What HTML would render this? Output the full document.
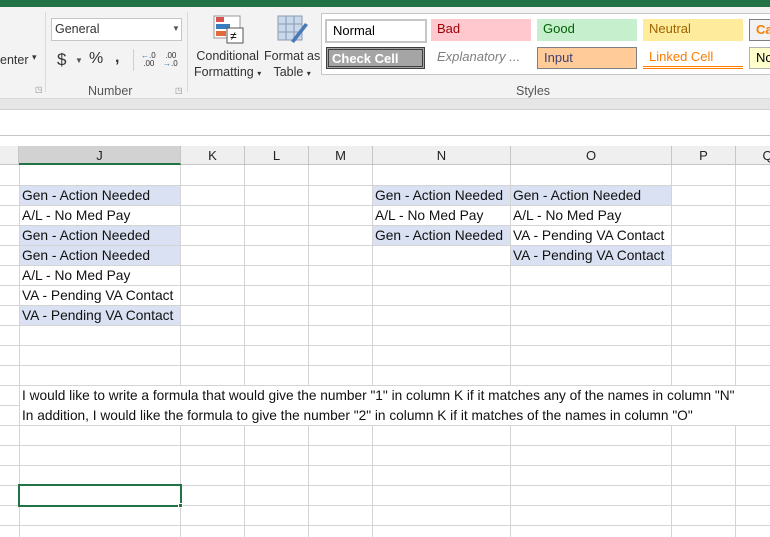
<!DOCTYPE html>
<html><head><style>
*{margin:0;padding:0;box-sizing:border-box}
body{width:770px;height:537px;overflow:hidden;background:#fff;font-family:"Liberation Sans",sans-serif;position:relative}
.a{position:absolute}
.rib{left:0;top:7px;width:770px;height:91px;background:#f3f3f3}
.t{font-size:12.5px;color:#333;white-space:nowrap}
.sty{position:absolute;height:22px;font-size:13px;padding:2px 6px;white-space:nowrap;overflow:hidden}
.cell{position:absolute;font-size:13.8px;color:#111;white-space:nowrap;line-height:20px;padding-left:3px}
.hl{position:absolute;left:0;width:770px;height:1px;background:#d4d4d4}
.vl{position:absolute;top:165px;height:372px;width:1px;background:#d4d4d4}
.hd{position:absolute;top:146px;height:19px;font-size:13px;color:#222;text-align:center;line-height:19px;border-right:1px solid #c6c6c6}
</style></head><body>
<div class="a" style="left:0;top:0;width:770px;height:7px;background:#217346"></div>
<div class="a rib"></div>
<div class="a t" style="left:0;top:53px">enter</div>
<div class="a t" style="left:32px;top:52px;font-size:9px">▾</div>
<div class="a" style="left:45px;top:12px;width:1px;height:80px;background:#dadada"></div>
<div class="a t" style="left:35px;top:85px;font-size:8px;color:#888">◳</div>
<div class="a" style="left:51px;top:18px;width:131px;height:23px;background:#fff;border:1px solid #c6c6c6"></div>
<div class="a t" style="left:55px;top:22px">General</div>
<div class="a t" style="left:172px;top:24px;font-size:8px;color:#555">▼</div>
<div class="a t" style="left:57px;top:50px;font-size:17px">$</div>
<div class="a t" style="left:75px;top:56px;font-size:8px;color:#555">▼</div>
<div class="a t" style="left:89px;top:50px;font-size:16px">%</div>
<div class="a t" style="left:115px;top:49px;font-size:16px;font-weight:bold">,</div>
<div class="a" style="left:133px;top:49px;width:1px;height:22px;background:#d0d0d0"></div>
<div class="a t" style="left:141px;top:52px;font-size:8px;line-height:8px;color:#333"><span style="color:#2b6cb0">←</span>.0<br>&nbsp;.00</div>
<div class="a t" style="left:163px;top:52px;font-size:8px;line-height:8px;color:#333">&nbsp;.00<br><span style="color:#2b6cb0">→</span>.0</div>
<div class="a t" style="left:88px;top:84px;color:#555">Number</div>
<div class="a t" style="left:175px;top:86px;font-size:8px;color:#888">◳</div>
<div class="a" style="left:187px;top:12px;width:1px;height:80px;background:#dadada"></div>
<svg class="a" style="left:213px;top:15px" width="32" height="30"><g stroke="#999" fill="#fff"><rect x="1" y="1" width="26" height="22"/></g><rect x="3" y="2" width="8" height="5" fill="#d9534f"/><rect x="3" y="9" width="14" height="5" fill="#3a7cc0"/><rect x="3" y="16" width="10" height="5" fill="#e06a3a"/><rect x="14" y="13" width="16" height="15" fill="#fff" stroke="#555"/><text x="17" y="25" font-size="12" font-family="Liberation Sans">≠</text></svg>
<svg class="a" style="left:277px;top:15px" width="32" height="30"><rect x="1" y="1" width="24" height="24" fill="#c9d8ea" stroke="#8a9bb0"/><path d="M1 9H25M1 17H25M9 1V25M17 1V25" stroke="#8a9bb0"/><path d="M14 26L28 8l3 2-14 18z" fill="#4a7ab5"/></svg>
<div class="a t" style="left:194px;top:48px;text-align:center;line-height:16px">Conditional<br>Formatting <span style="font-size:8px">▾</span></div>
<div class="a t" style="left:264px;top:48px;text-align:center;line-height:16px">Format as<br>Table <span style="font-size:8px">▾</span></div>
<div class="a" style="left:321px;top:13px;width:449px;height:62px;border:1px solid #c6c6c6;border-right:none;background:#fff"></div>
<div class="sty" style="left:325px;top:19px;width:102px;height:24px;border:2px solid #c6c6c6;background:#fff;color:#000">Normal</div>
<div class="sty" style="left:431px;top:19px;width:100px;background:#ffc7ce;color:#9c0006">Bad</div>
<div class="sty" style="left:537px;top:19px;width:100px;background:#c6efce;color:#006100">Good</div>
<div class="sty" style="left:643px;top:19px;width:100px;background:#ffeb9c;color:#9c6500">Neutral</div>
<div class="sty" style="left:749px;top:19px;width:30px;background:#f2f2f2;border:1px solid #7f7f7f;color:#fa7d00;font-weight:bold">Cal</div>
<div class="sty" style="left:326px;top:47px;width:99px;height:22px;background:#a5a5a5;border:3px double #3f3f3f;color:#fff;font-weight:bold;padding:1px 3px">Check Cell</div>
<div class="sty" style="left:431px;top:47px;width:100px;color:#7f7f7f;font-style:italic">Explanatory ...</div>
<div class="sty" style="left:537px;top:47px;width:100px;background:#ffcc99;border:1px solid #7f7f7f;color:#3f3f76">Input</div>
<div class="sty" style="left:643px;top:47px;width:100px;color:#fa7d00;border-bottom:3px double #ff8001">Linked Cell</div>
<div class="sty" style="left:749px;top:47px;width:30px;background:#ffffcc;border:1px solid #b2b2b2;color:#000">No</div>
<div class="a t" style="left:516px;top:84px;color:#555">Styles</div>
<div class="a" style="left:0;top:98px;width:770px;height:12px;background:#e6e6e6;border-top:1px solid #d8d8d8;border-bottom:1px solid #d0d0d0"></div>
<div class="a" style="left:0;top:135px;width:770px;height:1px;background:#c6c6c6"></div>
<div class="a" style="left:0;top:136px;width:770px;height:29px;background:#fff"></div>
<div class="a" style="left:0;top:146px;width:770px;height:19px;background:#efefef;border-bottom:1px solid #c6c6c6"></div>
<div class="hd" style="left:0;width:19px"></div>
<div class="hd" style="left:19px;width:162px;background:#d2d2d2;border-bottom:2px solid #217346;height:19px">J</div>
<div class="hd" style="left:181px;width:64px">K</div>
<div class="hd" style="left:245px;width:64px">L</div>
<div class="hd" style="left:309px;width:64px">M</div>
<div class="hd" style="left:373px;width:138px">N</div>
<div class="hd" style="left:511px;width:161px">O</div>
<div class="hd" style="left:672px;width:64px">P</div>
<div class="hd" style="left:736px;width:64px">Q</div>
<div class="a" style="left:19px;top:185px;width:161px;height:20px;background:#d9e1f2"></div>
<div class="a" style="left:19px;top:225px;width:161px;height:40px;background:#d9e1f2"></div>
<div class="a" style="left:19px;top:305px;width:161px;height:20px;background:#d9e1f2"></div>
<div class="a" style="left:372px;top:185px;width:138px;height:20px;background:#d9e1f2"></div>
<div class="a" style="left:372px;top:225px;width:138px;height:20px;background:#d9e1f2"></div>
<div class="a" style="left:510px;top:185px;width:161px;height:20px;background:#d9e1f2"></div>
<div class="a" style="left:510px;top:245px;width:161px;height:20px;background:#d9e1f2"></div>
<div class="hl" style="top:185px"></div><div class="hl" style="top:205px"></div><div class="hl" style="top:225px"></div><div class="hl" style="top:245px"></div><div class="hl" style="top:265px"></div><div class="hl" style="top:285px"></div><div class="hl" style="top:305px"></div><div class="hl" style="top:325px"></div><div class="hl" style="top:345px"></div><div class="hl" style="top:365px"></div><div class="hl" style="top:385px"></div><div class="hl" style="top:405px"></div><div class="hl" style="top:425px"></div><div class="hl" style="top:445px"></div><div class="hl" style="top:465px"></div><div class="hl" style="top:485px"></div><div class="hl" style="top:505px"></div><div class="hl" style="top:525px"></div>
<div class="vl" style="left:19px"></div><div class="vl" style="left:180px"></div><div class="vl" style="left:244px"></div><div class="vl" style="left:308px"></div><div class="vl" style="left:372px"></div><div class="vl" style="left:510px"></div><div class="vl" style="left:671px"></div><div class="vl" style="left:735px"></div>
<div class="a" style="left:20px;top:386px;width:750px;height:39px;background:#fff"></div>
<div class="cell" style="left:19px;top:186px">Gen - Action Needed</div>
<div class="cell" style="left:19px;top:206px">A/L - No Med Pay</div>
<div class="cell" style="left:19px;top:226px">Gen - Action Needed</div>
<div class="cell" style="left:19px;top:246px">Gen - Action Needed</div>
<div class="cell" style="left:19px;top:266px">A/L - No Med Pay</div>
<div class="cell" style="left:19px;top:286px">VA - Pending VA Contact</div>
<div class="cell" style="left:19px;top:306px">VA - Pending VA Contact</div>
<div class="cell" style="left:372px;top:186px">Gen - Action Needed</div>
<div class="cell" style="left:372px;top:206px">A/L - No Med Pay</div>
<div class="cell" style="left:372px;top:226px">Gen - Action Needed</div>
<div class="cell" style="left:510px;top:186px">Gen - Action Needed</div>
<div class="cell" style="left:510px;top:206px">A/L - No Med Pay</div>
<div class="cell" style="left:510px;top:226px">VA - Pending VA Contact</div>
<div class="cell" style="left:510px;top:246px">VA - Pending VA Contact</div>
<div class="cell" style="left:19px;top:386px;font-size:13.7px">I would like to write a formula that would give the number "1" in column K if it matches any of the names in column "N"</div>
<div class="cell" style="left:19px;top:406px;font-size:13.7px">In addition, I would like the formula to give the number "2" in column K if it matches of the names in column "O"</div>
<div class="a" style="left:18px;top:484px;width:164px;height:23px;border:2px solid #217346"></div>
<div class="a" style="left:178px;top:503px;width:5px;height:5px;background:#217346;border:1px solid #fff"></div>
</body></html>
